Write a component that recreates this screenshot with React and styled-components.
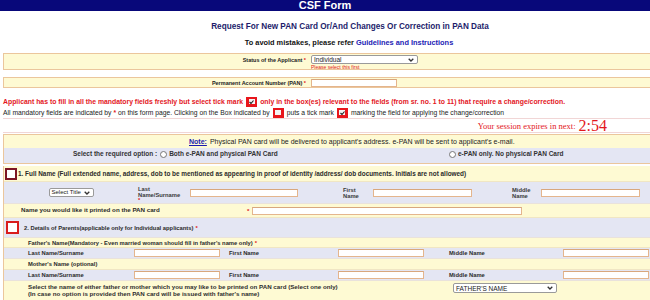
import React from "react";
import styled, { createGlobalStyle } from "styled-components";

const Global = createGlobalStyle`
  html, body { margin: 0; padding: 0; background: #ffffff; overflow: hidden; }
  body { font-family: "Liberation Sans", Arial, sans-serif; color: #222; }
  * { box-sizing: border-box; }
`;

const YEL = "#fefad3";
const LAV = "#e4e6f3";
const TAN = "#ebc69c";

const Page = styled.div`
  width: 650px;
  height: 300px;
  overflow: hidden;
`;

const Header = styled.div`
  height: 11px;
  background: #08087a;
  color: #fff;
  font-weight: bold;
  font-size: 11px;
  line-height: 11px;
  text-align: center;
`;

const Title = styled.div`
  margin-top: 11px;
  text-align: center;
  padding-left: 50px;
  font-weight: bold;
  font-size: 8.2px;
  line-height: 10px;
  color: #1d1d6b;
  white-space: nowrap;
`;

const SubTitle = styled.div`
  margin-top: 6px;
  text-align: center;
  padding-left: 48px;
  font-weight: bold;
  font-size: 7.4px;
  line-height: 9px;
  color: #111;
  white-space: nowrap;
  a { color: #2323b5; text-decoration: none; }
`;

const Body = styled.div`
  width: 660px;
  padding-left: 3px;
`;

const Band = styled.div`
  display: grid;
  grid-template-columns: 302px 1fr;
  background: ${YEL};
  border: 1px solid ${TAN};
  margin-top: ${(p) => p.$mt || 0}px;
  height: ${(p) => p.$h}px;
`;

const BandLabel = styled.div`
  text-align: right;
  font-size: 5.5px;
  font-weight: bold;
  color: #222;
  padding-top: ${(p) => p.$pt || 2}px;
  span { color: #e02020; }
`;

const BandControl = styled.div`
  padding-left: 5px;
  padding-top: 1px;
`;

const FakeSelect = styled.div`
  display: flex;
  align-items: center;
  justify-content: space-between;
  width: ${(p) => p.$w}px;
  height: ${(p) => p.$h || 9}px;
  border: 1px solid #9a9a9a;
  border-radius: 2px;
  background: #fff;
  font-size: ${(p) => p.$fs || 6.5}px;
  font-weight: normal;
  color: #222;
  padding: 0 3px 0 2px;
  white-space: nowrap;
  flex-shrink: 0;
`;

const Chevron = () => (
  <svg width="6" height="4" viewBox="0 0 6 4">
    <path d="M0.7 0.7 L3 3 L5.3 0.7" stroke="#333" strokeWidth="1.3" fill="none" />
  </svg>
);

const Hint = styled.div`
  font-size: 5px;
  color: #e02020;
  line-height: 5px;
  margin-top: 1px;
`;

const TextInput = styled.div`
  width: ${(p) => p.$w}px;
  height: ${(p) => p.$h || 8}px;
  background: #fff;
  border: 1px solid #e4b58d;
  border-top-color: #d8a77e;
  flex-shrink: 0;
`;

const Notice = styled.div`
  margin-top: 8px;
  line-height: 11px;
  white-space: nowrap;
`;

const RedLine = styled.div`
  color: #e3161d;
  font-weight: bold;
  font-size: 6.86px;
  display: flex;
  align-items: center;
`;

const PlainLine = styled.div`
  color: #222;
  font-size: 6.75px;
  display: flex;
  align-items: center;
  span.star { color: #e02020; font-weight: bold; margin: 0 2px; }
`;

const TickBoxOuter = styled.span`
  display: inline-flex;
  align-items: center;
  justify-content: center;
  width: 11px;
  height: 10px;
  background: #e8161c;
  margin: 0 3px;
`;

const TickBoxInner = styled.span`
  display: inline-flex;
  align-items: center;
  justify-content: center;
  width: 6px;
  height: 5px;
  background: #f4f4f4;
`;

const TickBox = ({ checked }) => (
  <TickBoxOuter>
    <TickBoxInner>
      {checked && (
        <svg width="5" height="4" viewBox="0 0 5 4">
          <path d="M0.5 2 L2 3.5 L4.5 0.5" stroke="#222" strokeWidth="1.1" fill="none" />
        </svg>
      )}
    </TickBoxInner>
  </TickBoxOuter>
);

const SessionRow = styled.div`
  height: 15px;
  border: 1px solid #f1d6d6;
  border-left: none;
  display: flex;
  align-items: center;
  justify-content: flex-end;
  padding-right: 52px;
  font-family: "Liberation Serif", "Times New Roman", serif;
  color: #e3161d;
  font-size: 8.5px;
  white-space: nowrap;
  b { font-size: 16px; font-weight: normal; margin-left: 3px; }
`;

const NoteBox = styled.div`
  margin-top: 1px;
  border: 1px solid ${TAN};
`;

const NoteTop = styled.div`
  background: ${YEL};
  height: 13px;
  display: flex;
  align-items: center;
  padding-left: 185px;
  font-size: 7px;
  color: #222;
  white-space: nowrap;
  a { color: #1a1ab0; font-weight: bold; text-decoration: underline; margin-right: 3px; }
`;

const NoteBottom = styled.div`
  background: ${LAV};
  height: 15px;
  padding-top: 2px;
  display: grid;
  grid-template-columns: 442px 1fr;
  align-items: start;
  font-size: 6.5px;
  line-height: 8px;
  font-weight: bold;
  color: #333;
  white-space: nowrap;
`;

const OptLeft = styled.div`
  display: flex;
  align-items: center;
  padding-left: 69px;
`;

const OptRight = styled.div`
  display: flex;
  align-items: center;
`;

const Radio = styled.span`
  display: inline-block;
  width: 7px;
  height: 7px;
  border-radius: 50%;
  border: 1px solid #777;
  background: #fff;
  margin: 0 2px 0 3px;
`;

const Section = styled.div`
  margin-top: 2px;
  border-left: 1px solid ${TAN};
`;

const Row = styled.div`
  display: flex;
  align-items: ${(p) => p.$align || "center"};
  background: ${(p) => (p.$lav ? LAV : YEL)};
  height: ${(p) => p.$h}px;
  border-bottom: 1px solid ${(p) => (p.$lav ? "#e9e2dc" : "#f0e6c4")};
  font-size: ${(p) => p.$fs || 5.8}px;
  font-weight: bold;
  color: #2a2a2a;
  padding-left: ${(p) => p.$pl || 0}px;
  padding-top: ${(p) => p.$pt || 0}px;
  white-space: nowrap;
`;

const SecBox = styled.span`
  display: inline-block;
  width: ${(p) => p.$s}px;
  height: ${(p) => p.$s}px;
  background: #fff;
  border: 2px solid ${(p) => p.$c};
  margin-left: ${(p) => p.$ml}px;
  margin-right: ${(p) => p.$mr}px;
  flex-shrink: 0;
`;

const Cell = styled.div`
  width: ${(p) => p.$w}px;
  flex-shrink: 0;
  display: flex;
  align-items: center;
  justify-content: ${(p) => (p.$center ? "center" : "flex-start")};
  padding-left: ${(p) => p.$pl || 0}px;
  line-height: 6.5px;
`;

const Stack = styled.div`
  display: flex;
  flex-direction: column;
  line-height: 6px;
  color: #3a3a3a;
  padding-top: ${(p) => p.$pt || 0}px;
  .star { color: #e02020; line-height: 4px; }
`;

const Star = styled.span`
  color: #e02020;
  margin-left: ${(p) => p.$ml || 0}px;
  margin-right: ${(p) => p.$mr || 0}px;
`;

const Lines = styled.div`
  display: flex;
  flex-direction: column;
  font-size: 6.2px;
  line-height: 7px;
  font-weight: bold;
  color: #2e2e2e;
`;

const NameRow = () => (
  <Row $lav $h={11} $pl={24}>
    <Cell $w={106}>Last Name/Surname</Cell>
    <Cell $w={95}>
      <TextInput $w={86} />
    </Cell>
    <Cell $w={109}>First Name</Cell>
    <Cell $w={111}>
      <TextInput $w={86} />
    </Cell>
    <Cell $w={114}>Middle Name</Cell>
    <Cell $w={90}>
      <TextInput $w={86} />
    </Cell>
  </Row>
);

export default function App() {
  return (
    <>
      <Global />
      <Page>
        <Header>CSF Form</Header>
        <Title>Request For New PAN Card Or/And Changes Or Correction in PAN Data</Title>
        <SubTitle>
          To avoid mistakes, please refer <a>Guidelines and Instructions</a>
        </SubTitle>
        <Body>
          <Band $mt={6} $h={17}>
            <BandLabel $pt={3}>
              Status of the Applicant <span>*</span>
            </BandLabel>
            <BandControl>
              <FakeSelect $w={107} $h={9}>
                <span>Individual</span>
                <Chevron />
              </FakeSelect>
              <Hint>Please select this first</Hint>
            </BandControl>
          </Band>
          <Band $mt={7} $h={11}>
            <BandLabel $pt={2}>
              Permanent Account Number (PAN) <span>*</span>
            </BandLabel>
            <BandControl>
              <TextInput $w={86} $h={8} />
            </BandControl>
          </Band>
          <Notice>
            <RedLine>
              Applicant has to fill in all the mandatory fields freshly but select tick mark
              <TickBox checked />
              only in the box(es) relevant to the fields (from sr. no. 1 to 11) that require a
              change/correction.
            </RedLine>
            <PlainLine>
              All mandatory fields are indicated by <span className="star">*</span> on this form
              page. Clicking on the Box indicated by
              <TickBox />
              puts a tick mark
              <TickBox checked />
              marking the field for applying the change/correction
            </PlainLine>
          </Notice>
          <SessionRow>
            Your session expires in next: <b>2:54</b>
          </SessionRow>
          <NoteBox>
            <NoteTop>
              <a>Note:</a> Physical PAN card will be delivered to applicant's address. e-PAN will be
              sent to applicant's e-mail.
            </NoteTop>
            <NoteBottom>
              <OptLeft>
                Select the required option : <Radio /> Both e-PAN and physical PAN Card
              </OptLeft>
              <OptRight>
                <Radio /> e-PAN only. No physical PAN Card
              </OptRight>
            </NoteBottom>
          </NoteBox>
          <Section>
            <Row $h={16} $fs={6.4}>
              <SecBox $s={12} $c="#7d1525" $ml={1} $mr={1} />
              1. Full Name (Full extended name, address, dob to be mentioned as appearing in proof of
              identity /address/ dob documents. Initials are not allowed)
            </Row>
            <Row $lav $h={22}>
              <Cell $w={134} $center>
                <FakeSelect $w={45} $h={9} $fs={6}>
                  <span>Select Title</span>
                  <Chevron />
                </FakeSelect>
              </Cell>
              <Cell $w={52}>
                <Stack $pt={3}>
                  <span>Last</span>
                  <span>Name/Surname</span>
                  <span className="star">*</span>
                </Stack>
              </Cell>
              <Cell $w={153}>
                <TextInput $w={108} />
              </Cell>
              <Cell $w={30}>
                <Stack>
                  <span>First</span>
                  <span>Name</span>
                </Stack>
              </Cell>
              <Cell $w={139}>
                <TextInput $w={99} />
              </Cell>
              <Cell $w={29}>
                <Stack>
                  <span>Middle</span>
                  <span>Name</span>
                </Stack>
              </Cell>
              <Cell $w={110}>
                <TextInput $w={99} />
              </Cell>
            </Row>
            <Row $h={14} $pl={17} $fs={6.2}>
              <Cell $w={226}>Name you would like it printed on the PAN card</Cell>
              <Star $mr={3}>*</Star>
              <TextInput $w={270} />
            </Row>
            <Row $lav $h={20}>
              <SecBox $s={13} $c="#d91c1c" $ml={2} $mr={5} />
              2. Details of Parents(applicable only for Individual applicants) <Star $ml={2}>*</Star>
            </Row>
            <Row $h={10} $pl={24}>
              Father's Name(Mandatory - Even married woman should fill in father's name only)
              <Star $ml={2}>*</Star>
            </Row>
            <NameRow />
            <Row $h={11} $pl={24}>
              Mother's Name (optional)
            </Row>
            <NameRow />
            <Row $h={22} $pl={24} $align="flex-start" $pt={2}>
              <Cell $w={425}>
                <Lines>
                  <span>
                    Select the name of either father or mother which you may like to be printed on
                    PAN card (Select one only)
                  </span>
                  <span>
                    (In case no option is provided then PAN card will be issued with father's name)
                  </span>
                </Lines>
              </Cell>
              <FakeSelect $w={104} $h={10} $fs={6.5}>
                <span>FATHER'S NAME</span>
                <Chevron />
              </FakeSelect>
            </Row>
          </Section>
        </Body>
      </Page>
    </>
  );
}
